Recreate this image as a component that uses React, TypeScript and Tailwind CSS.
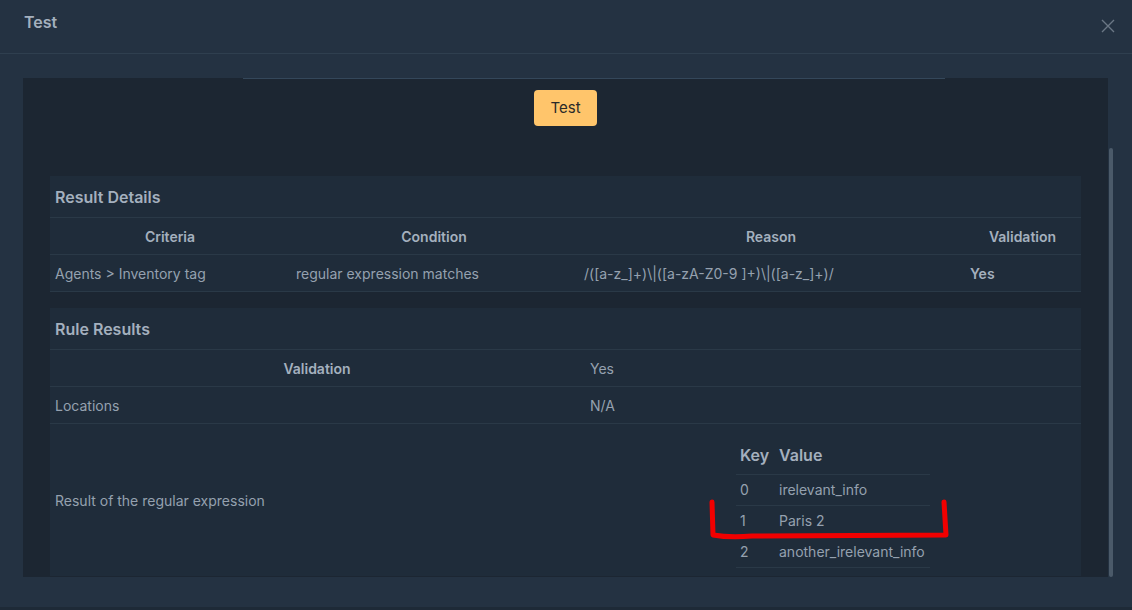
import React from 'react';

interface DetailRow {
  criteria: string;
  condition: string;
  reason: string;
  validation: string;
}

const details: DetailRow[] = [
  {
    criteria: 'Agents > Inventory tag',
    condition: 'regular expression matches',
    reason: '/([a-z_]+)\\|([a-zA-Z0-9 ]+)\\|([a-z_]+)/',
    validation: 'Yes',
  },
];

const matches = [
  { key: '0', value: 'irelevant_info' },
  { key: '1', value: 'Paris 2' },
  { key: '2', value: 'another_irelevant_info' },
];

const App: React.FC = (): React.ReactElement => {
  return (
    <div className="relative h-[610px] w-[1132px] overflow-hidden bg-[#243242] font-['Inter','Liberation_Sans',sans-serif] text-[14px] text-[#95a1af]">
      {/* Header */}
      <div className="flex h-[54px] items-start justify-between border-b border-[#2f3f4f] pl-[24px] pr-[17px]">
        <h1 className="pt-[12px] text-[16px] leading-[20px] font-semibold text-[#a4b0be]">Test</h1>
        <svg className="mt-[19px]" width="14" height="14" viewBox="0 0 14 14" fill="none" stroke="#6b7785" strokeWidth="1.4">
          <path d="M1 1L13 13M13 1L1 13" />
        </svg>
      </div>

      {/* Body */}
      <div className="flex pl-[23px] pt-[24px]">
        <div className="flex h-[499px] w-[1085px] flex-col overflow-hidden bg-[#1c2632]">
          <div className="ml-[220px] h-px w-[702px] bg-[#34475a]" />
          <button className="mt-[11px] flex h-[36px] w-[63px] items-center justify-center self-center rounded-[4px] bg-[#ffc56b] text-[15px] text-[#2a2a2a]">
            Test
          </button>

          {/* Result Details */}
          <div className="mt-[50px] ml-[27px] w-[1031px] bg-[#1f2c3a]">
            <div className="flex h-[41px] items-center px-[5px] text-[16px] font-semibold text-[#a4b0be]">Result Details</div>
            <div className="grid h-[37px] grid-cols-[240px_288px_386px_117px] items-center border-t border-[#2a3947] font-semibold text-[#a4b0be]">
              <div className="text-center">Criteria</div>
              <div className="text-center">Condition</div>
              <div className="text-center">Reason</div>
              <div className="text-center">Validation</div>
            </div>
            {details.map((row) => (
              <div key={row.criteria} className="grid h-[38px] grid-cols-[240px_288px_386px_117px] items-center border-t border-b border-[#2a3947]">
                <div className="px-[5px]">{row.criteria}</div>
                <div className="px-[6px]">{row.condition}</div>
                <div className="px-[6px]">{row.reason}</div>
                <div className="px-[6px] font-semibold text-[#a4b0be]">{row.validation}</div>
              </div>
            ))}
          </div>

          {/* Rule Results */}
          <div className="mt-[16px] ml-[27px] w-[1031px] bg-[#1f2c3a]">
            <div className="flex h-[41px] items-center px-[5px] text-[16px] font-semibold text-[#a4b0be]">Rule Results</div>
            <div className="grid h-[37px] grid-cols-[534px_497px] items-center border-t border-[#2a3947]">
              <div className="text-center font-semibold text-[#a4b0be]">Validation</div>
              <div className="px-[6px]">Yes</div>
            </div>
            <div className="grid h-[37px] grid-cols-[534px_497px] items-center border-t border-[#2a3947]">
              <div className="px-[5px]">Locations</div>
              <div className="px-[6px]">N/A</div>
            </div>
            <div className="grid h-[153px] grid-cols-[534px_497px] items-center border-t border-[#2a3947]">
              <div className="px-[5px]">Result of the regular expression</div>
              <div className="pl-[152px] pt-[3px]">
                <div className="w-[194px]">
                  <div className="flex h-[38px] items-center text-[16px] font-semibold text-[#a4b0be]">
                    <div className="w-[37px] pl-[4px]">Key</div>
                    <div className="pl-[6px]">Value</div>
                  </div>
                  {matches.map((m) => (
                    <div key={m.key} className="flex h-[31px] items-center border-t border-[#2a3947] last:h-[32px] last:border-b">
                      <div className="w-[37px] pl-[4px]">{m.key}</div>
                      <div className="pl-[6px]">{m.value}</div>
                    </div>
                  ))}
                </div>
              </div>
            </div>
          </div>
        </div>
        <div className="mt-[70px] ml-px h-[429px] w-[4px] rounded-full bg-[#4b5a69]" />
      </div>

      <div className="absolute bottom-0 left-0 h-[3px] w-full bg-[#1e2a37]" />

      {/* Hand-drawn annotation */}
      <svg className="pointer-events-none absolute left-0 top-0" width="1132" height="610">
        <path
          d="M712 502 L713 535 Q730 538 752 536 L946 535 L944 502"
          fill="none"
          stroke="#f10000"
          strokeWidth="5"
          strokeLinecap="round"
          strokeLinejoin="round"
        />
      </svg>
    </div>
  );
};

export default App;
